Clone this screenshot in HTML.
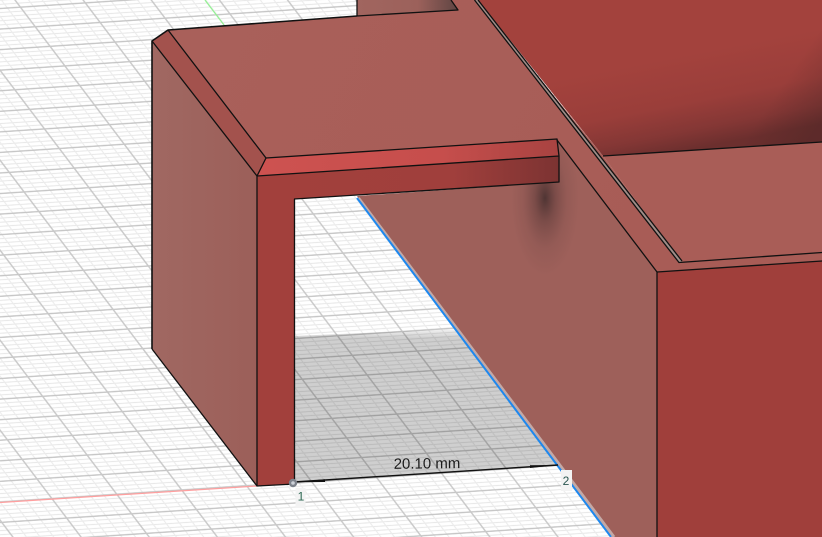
<!DOCTYPE html>
<html>
<head>
<meta charset="utf-8">
<style>
html,body{margin:0;padding:0;background:#fff;width:822px;height:537px;overflow:hidden}
svg{display:block}
</style>
</head>
<body>
<svg width="822" height="537" viewBox="0 0 822 537" xmlns="http://www.w3.org/2000/svg">
<defs>
<pattern id="grid" width="100" height="100" patternUnits="userSpaceOnUse" patternTransform="matrix(.649 -.0428 .1483 .1958 571 464.2)">
<rect width="100" height="100" fill="#fff"/>
<g stroke="#e7e7e7" stroke-width="5" fill="none">
<path d="M0 20H100M0 40H100M0 60H100M0 80H100"/>
</g>
<g stroke="#ececec" stroke-width="2" fill="none">
<path d="M20 0V100M40 0V100M60 0V100M80 0V100"/>
</g>
<g stroke="#c4c4c4" stroke-width="6.500" fill="none">
<path d="M0 0H100M0 100H100"/>
</g>
<g stroke="#c8c8c8" stroke-width="2.600" fill="none">
<path d="M0 0V100M100 0V100"/>
</g>
</pattern>
<linearGradient id="left" x1="152" y1="0" x2="257" y2="0" gradientUnits="userSpaceOnUse">
<stop offset="0" stop-color="#a06862"/><stop offset="1" stop-color="#9c5f59"/>
</linearGradient>
<linearGradient id="top" x1="170" y1="30" x2="680" y2="260" gradientUnits="userSpaceOnUse">
<stop offset="0" stop-color="#a9605a"/><stop offset="1" stop-color="#a85c56"/>
</linearGradient>
<linearGradient id="notch" x1="357" y1="0" x2="458" y2="0" gradientUnits="userSpaceOnUse">
<stop offset="0" stop-color="#a1655f"/><stop offset=".6" stop-color="#9c615b"/><stop offset="1" stop-color="#5f4543"/>
</linearGradient>
<linearGradient id="cham" x1="266" y1="0" x2="559" y2="0" gradientUnits="userSpaceOnUse">
<stop offset="0" stop-color="#cd5250"/><stop offset=".6" stop-color="#c64e4c"/><stop offset="1" stop-color="#a84341"/>
</linearGradient>
<linearGradient id="beam" x1="257" y1="0" x2="559" y2="0" gradientUnits="userSpaceOnUse">
<stop offset="0" stop-color="#a2403c"/><stop offset=".65" stop-color="#a03f3c"/><stop offset="1" stop-color="#7c3332"/>
</linearGradient>
<linearGradient id="back" x1="660" y1="60" x2="678" y2="152" gradientUnits="userSpaceOnUse">
<stop offset="0" stop-color="#a3423d"/><stop offset=".5" stop-color="#9a3e3a"/><stop offset=".8" stop-color="#843735"/><stop offset="1" stop-color="#6c2f2e"/>
</linearGradient>
<linearGradient id="backright" x1="735" y1="60" x2="822" y2="120" gradientUnits="userSpaceOnUse">
<stop offset="0" stop-color="#3a2020" stop-opacity="0"/><stop offset=".5" stop-color="#3a2020" stop-opacity="0"/><stop offset="1" stop-color="#3a2020" stop-opacity=".3"/>
</linearGradient>
<linearGradient id="ground" x1="0" y1="328" x2="0" y2="338" gradientUnits="userSpaceOnUse">
<stop offset="0" stop-color="#000" stop-opacity="0.03"/><stop offset="1" stop-color="#000" stop-opacity="0.19"/>
</linearGradient>
<radialGradient id="wallshadow" cx="545" cy="198" r="1" gradientUnits="userSpaceOnUse" gradientTransform="translate(545 198) scale(34 78) translate(-545 -198)">
<stop offset="0" stop-color="#3c2a2a" stop-opacity=".8"/><stop offset=".3" stop-color="#4a3030" stop-opacity=".42"/><stop offset=".65" stop-color="#5a3a3a" stop-opacity=".14"/><stop offset="1" stop-color="#5a3a3a" stop-opacity="0"/>
</radialGradient>
<linearGradient id="innershadow" x1="0" y1="150" x2="3" y2="172" gradientUnits="userSpaceOnUse">
<stop offset="0" stop-color="#4a2a2a" stop-opacity=".4"/><stop offset="1" stop-color="#4a2a2a" stop-opacity="0"/>
</linearGradient>
<clipPath id="wallclip"><path d="M357 196L559 182L557 140L657 272V537H612Z"/></clipPath>
</defs>

<rect width="822" height="537" fill="url(#grid)"/>

<!-- ground shadow -->
<path d="M294 336L455 329L560 466L294 484Z" fill="url(#ground)"/>

<!-- axes -->
<path d="M0 502.500L257 486" stroke="#ff9f9f" stroke-width="1.300" fill="none"/>
<path d="M205 0L224 25" stroke="#95f095" stroke-width="1.300" fill="none"/>

<!-- notch at back -->
<path d="M357 0V16L458 10L451 0Z" fill="url(#notch)"/>

<!-- back wall -->
<path d="M478 0H822V142L603 156Z" fill="url(#back)"/>
<path d="M478 0H822V142L603 156Z" fill="url(#backright)"/>

<!-- top face -->
<path d="M168 30L357 16L458 10L451 0H476L603 156L681 262L822 252.500V261L657 272L557 140L266 158Z" fill="url(#top)"/>
<!-- inner top -->
<path d="M603 156L822 142V252.500L681 262Z" fill="#a95d57"/>
<path d="M603 156L822 142V170L625 186Z" fill="url(#innershadow)"/>

<!-- left face -->
<path d="M152 41L257 176V486L152 349Z" fill="url(#left)"/>
<!-- chamfer strip -->
<path d="M152 41L168 30L266 158L257 176Z" fill="#a3524d"/>

<!-- wall under beam -->
<path d="M357 196L559 182L557 140L657 272V537H612Z" fill="#9e605a"/>
<g clip-path="url(#wallclip)"><ellipse cx="545" cy="198" rx="34" ry="78" fill="url(#wallshadow)"/></g>

<!-- beam -->
<path d="M266 158L557 139L559 156L257 176Z" fill="url(#cham)"/>
<path d="M257 176L559 156V182L294.500 199V484L257 486Z" fill="url(#beam)"/>

<!-- front box -->
<path d="M657 272L822 261V537H657Z" fill="#a03f3b"/>

<!-- gray gap strip -->
<path d="M476 0L681 262" stroke="#9e8d88" stroke-width="3.500" fill="none"/>

<!-- blue selected edge -->
<path d="M358.500 198L614 537" stroke="#c4a9a6" stroke-width="3" fill="none"/>
<path d="M357 198L611 537" stroke="#1e88ee" stroke-width="2" fill="none"/>

<!-- edges -->
<g stroke="#111" stroke-width="1.300" fill="none" stroke-linejoin="round">
<path d="M152 349V41L168 30L357 16" stroke-width="1.600"/>
<path d="M152 349L257 486"/>
<path d="M152 41L257 176L266 158L168 30"/>
<path d="M266 158L557 139L559 156L257 176V486L294.500 484V199L559 182V156"/>
<path d="M357 16L458 10L451 0M357 0V16"/>
<path d="M557 140L657 272V537"/>
<path d="M657 272L822 261"/>
<path d="M474.500 0L679 262.500L822 252.500"/>
<path d="M478 0L682 261"/>
<path d="M603 156L822 142"/>
</g>

<!-- dimension -->
<path d="M294 482L558 465" stroke="#111" stroke-width="1.400" fill="none"/>
<path d="M297 482L325 479.300L325 482Z" fill="#111"/>
<path d="M558 465L530 465.300L530 468Z" fill="#111"/>
<text x="427" y="468.500" text-anchor="middle" font-family="'Liberation Sans',sans-serif" font-size="15" fill="#1a1a1a" transform="rotate(-.6 427 463)">20.10 mm</text>

<!-- point labels -->
<rect x="295.500" y="488" width="10" height="20" fill="#f3f3f3"/>
<rect x="561" y="470" width="11" height="21" fill="#f3f3f3"/>
<circle cx="293" cy="483" r="4.200" fill="#7d828b"/>
<circle cx="293" cy="483" r="1.800" fill="#cdd1d8"/>
<text x="301" y="500.500" text-anchor="middle" font-family="'Liberation Sans',sans-serif" font-size="12" fill="#2a6650">1</text>
<text x="566" y="485" text-anchor="middle" font-family="'Liberation Sans',sans-serif" font-size="12" fill="#2a5650">2</text>
</svg>
</body>
</html>
